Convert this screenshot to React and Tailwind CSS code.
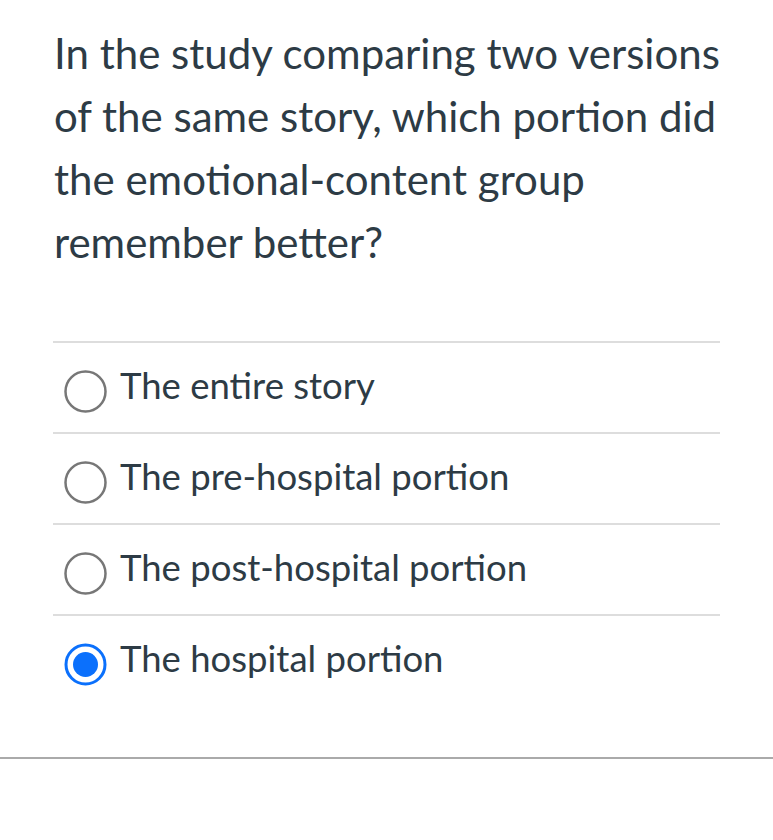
import React from "react";

const options = [
  { label: "The entire story", selected: false },
  { label: "The pre-hospital portion", selected: false },
  { label: "The post-hospital portion", selected: false },
  { label: "The hospital portion", selected: true },
];

function Radio({ selected }) {
  return (
    <svg width="43" height="43" viewBox="0 0 43 43" className="shrink-0">
      {selected ? (
        <>
          <circle cx="21.5" cy="21.5" r="19.5" fill="white" stroke="#0b70fc" strokeWidth="3" />
          <circle cx="21.5" cy="21.5" r="12.5" fill="#0b70fc" />
        </>
      ) : (
        <circle cx="21.5" cy="21.5" r="20" fill="white" stroke="#777777" strokeWidth="2.5" />
      )}
    </svg>
  );
}

export default function App() {
  return (
    <div className="w-[773px] h-[840px] bg-white font-['Lato',_'Noto_Sans',_sans-serif] text-[#2d3b45]">
      <div className="pl-[54px] pr-[40px] pt-[22px]">
        <p className="text-[42px] leading-[63px]">
          In the study comparing two versions of the same story, which portion did the emotional-content group remember better?
        </p>
      </div>
      <div className="mx-[53px] mt-[67px]">
        {options.map((o, i) => (
          <div key={i} className="border-t-2 border-[#dddddd] pt-[21px] pb-[19px] flex items-start">
            <div className="ml-[11px] mt-[6px]">
              <Radio selected={o.selected} />
            </div>
            <span className="ml-[13px] text-[36.5px] leading-[42px]">{o.label}</span>
          </div>
        ))}
      </div>
      <div className="mt-[52px] border-b-2 border-[#aaaaaa]" />
    </div>
  );
}
